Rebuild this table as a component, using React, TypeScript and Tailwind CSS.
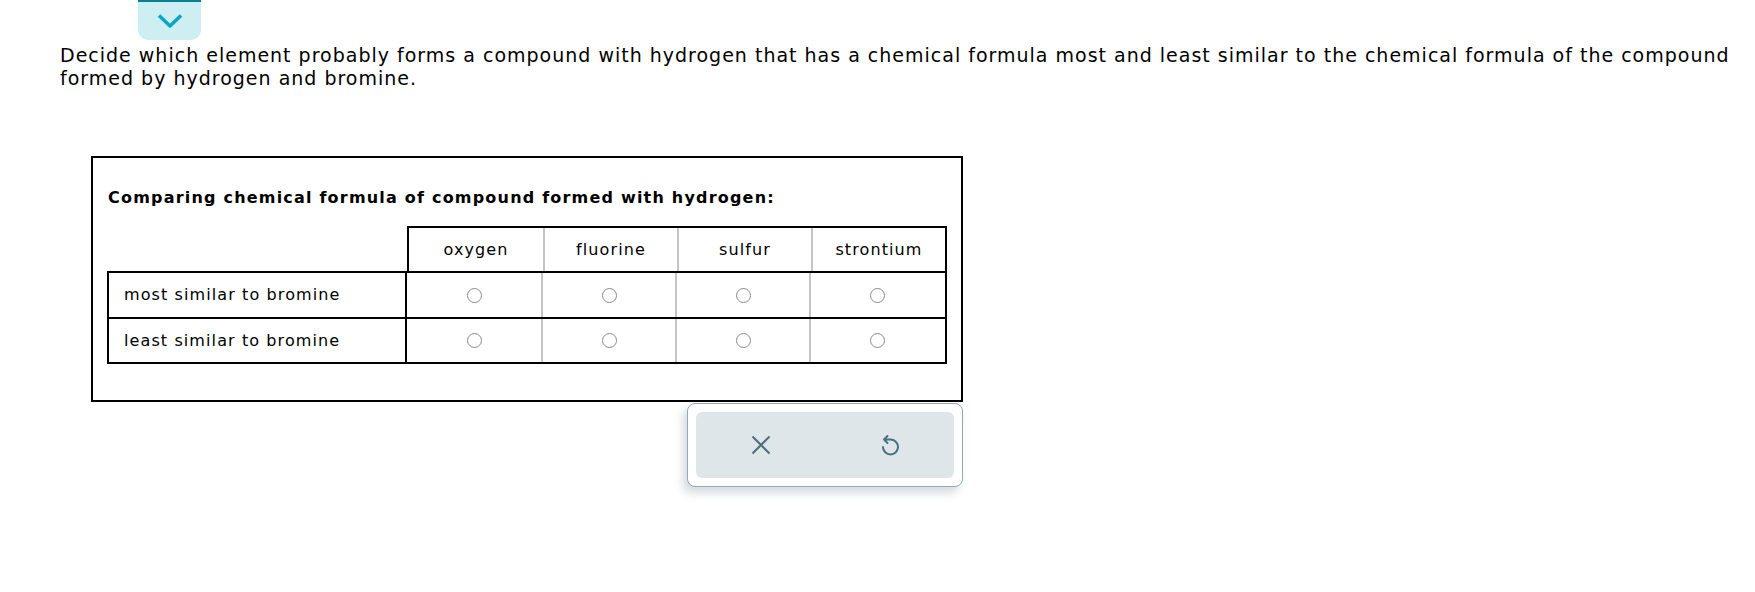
import React from "react";

const elements = ["oxygen", "fluorine", "sulfur", "strontium"];
const rows = ["most similar to bromine", "least similar to bromine"];

function Radio() {
  return <span className="block h-[15px] w-[15px] rounded-full border border-[#8a8a8a] bg-white" />;
}

export default function App() {
  return (
    <div className="min-h-screen bg-white text-black font-['DejaVu_Sans',Verdana,sans-serif]">
      {/* collapse tab */}
      <div className="ml-[138px] flex h-[40px] w-[63px] items-center justify-center rounded-b-[10px] border-t-2 border-[#0b7d90] bg-[#cdeef3]">
        <svg width="26" height="16" viewBox="0 0 26 16" fill="none">
          <path d="M2 2.5L13 13L24 2.5" stroke="#08a5c4" strokeWidth="3.5" strokeLinejoin="round" />
        </svg>
      </div>

      <p className="ml-[60px] mt-[4px] text-[19px] leading-[23px] tracking-[1px]">
        Decide which element probably forms a compound with hydrogen that has a chemical formula most and least
        similar to the chemical formula of the compound formed by hydrogen and bromine.
      </p>

      <div className="ml-[91px] mt-[66px] w-[872px]">
        <div className="h-[246px] border-2 border-black px-[14px] pt-[28px]">
          <p className="pl-[1px] text-[16px] font-bold leading-[24px] tracking-[1.2px]">
            Comparing chemical formula of compound formed with hydrogen:
          </p>

          <div className="mt-[16px] w-[840px] text-[16px] tracking-[1.1px]">
            {/* header row */}
            <div className="flex">
              <div className="w-[300px]" />
              <div className="flex border-2 border-b-0 border-black">
                {elements.map((el, i) => (
                  <div
                    key={el}
                    className={`flex h-[43px] w-[134px] items-center justify-center ${
                      i > 0 ? "border-l-2 border-[#c4c4c4]" : ""
                    }`}
                  >
                    {el}
                  </div>
                ))}
              </div>
            </div>

            {/* answer rows */}
            <div className="border-2 border-black">
              {rows.map((label, r) => (
                <div key={label} className={`flex ${r > 0 ? "h-[45px] border-t-2 border-black" : "h-[44px]"}`}>
                  <div className="flex w-[298px] items-center border-r-2 border-black pl-[15px]">{label}</div>
                  {elements.map((el, i) => (
                    <div
                      key={el}
                      className={`flex w-[134px] items-center justify-center ${
                        i > 0 ? "border-l-2 border-[#c4c4c4]" : ""
                      }`}
                    >
                      <Radio />
                    </div>
                  ))}
                </div>
              ))}
            </div>
          </div>
        </div>

        {/* action panel */}
        <div className="flex justify-end">
          <div className="mt-[1px] w-[276px] rounded-[8px] border border-[#93aab2] bg-white p-[8px] shadow-[-4px_6px_8px_rgba(90,110,120,0.25)]">
            <div className="flex h-[66px] rounded-[6px] bg-[#dfe6e9]">
              <button className="flex flex-1 items-center justify-center">
                <svg width="24" height="24" viewBox="0 0 24 24" fill="none">
                  <path d="M3.5 3.5L20.5 20.5M20.5 3.5L3.5 20.5" stroke="#4a707c" strokeWidth="2" />
                </svg>
              </button>
              <button className="flex flex-1 items-center justify-center">
                <svg width="24" height="24" viewBox="0 0 24 24" fill="none">
                  <path
                    d="M9.5 3L6 6.5L9.5 10M6 6.5h6.5a7.5 7.5 0 1 1 -7.5 7.5"
                    stroke="#4a707c"
                    strokeWidth="2"
                    strokeLinecap="round"
                    strokeLinejoin="round"
                  />
                </svg>
              </button>
            </div>
          </div>
        </div>
      </div>
    </div>
  );
}
